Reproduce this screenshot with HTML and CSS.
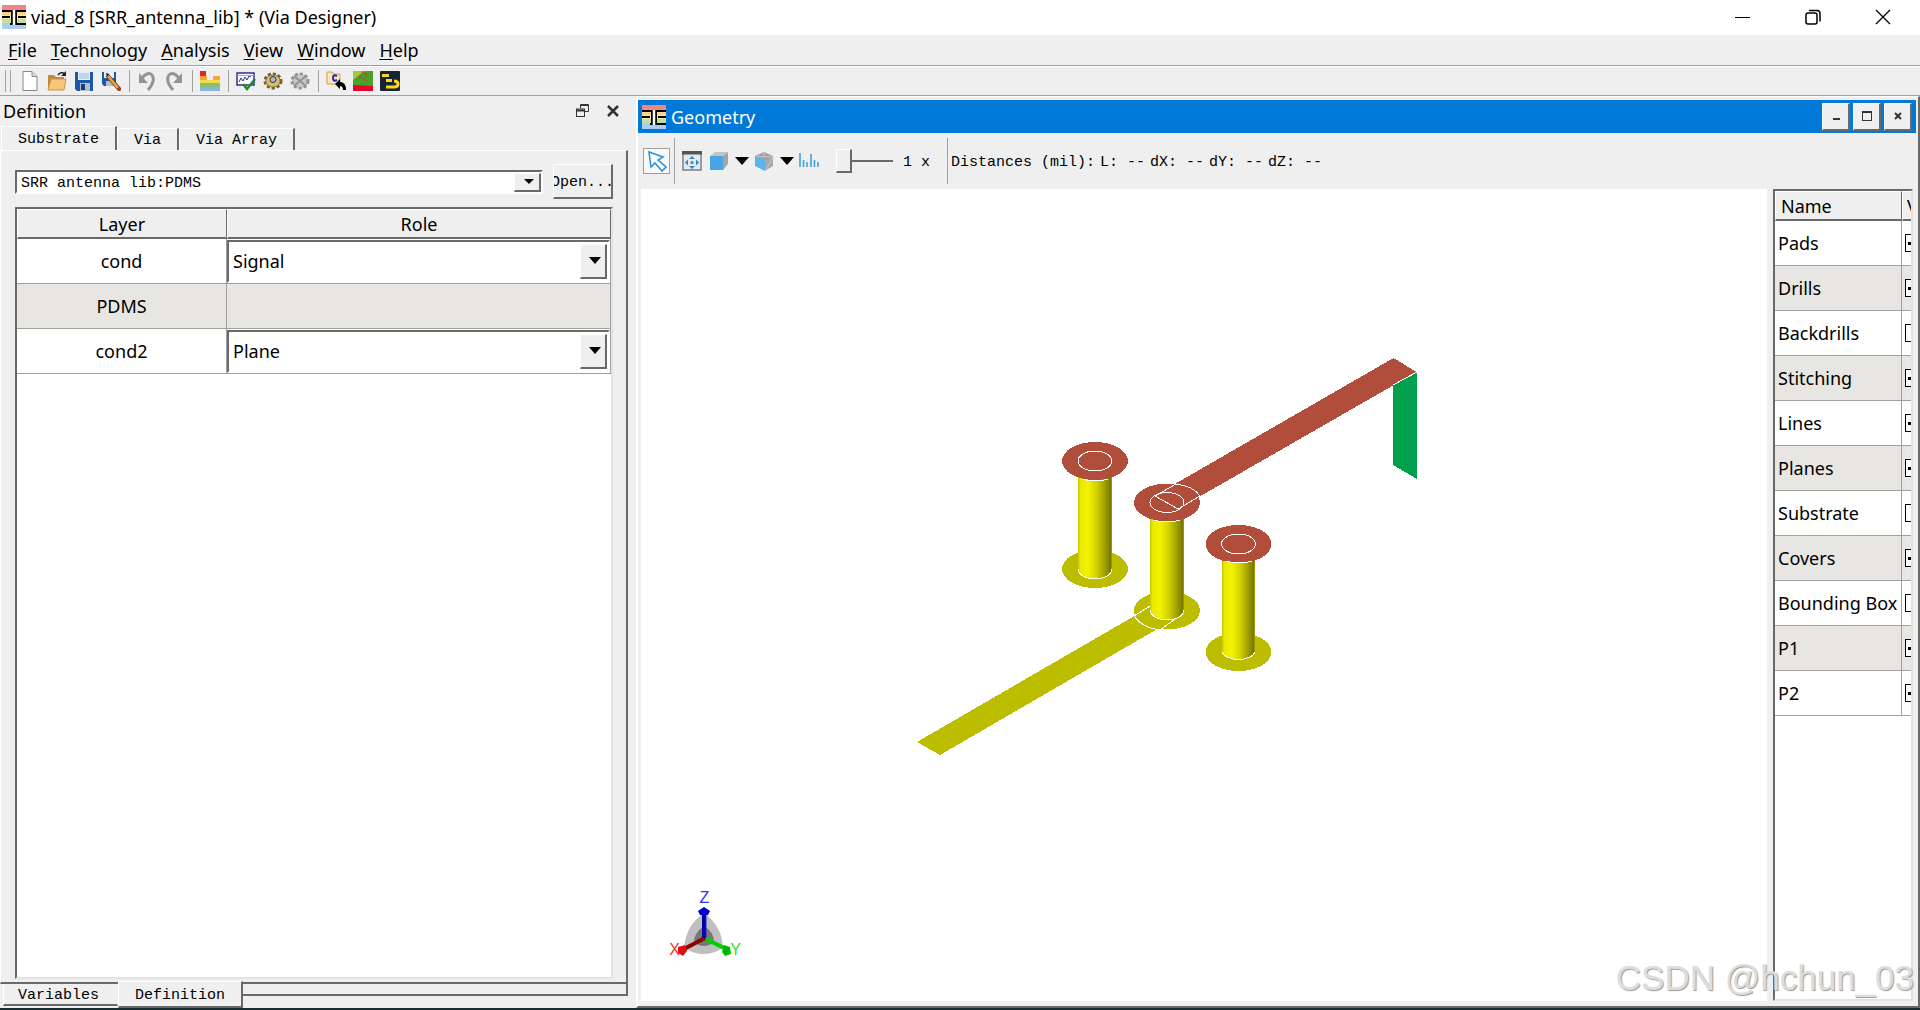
FILE: index.html
```html
<!DOCTYPE html>
<html lang="en">
<head>
<meta charset="utf-8">
<title>viad_8 [SRR_antenna_lib] * (Via Designer)</title>
<link rel="stylesheet" href="styles.css">
</head>
<body>
<svg class="defs" aria-hidden="true">
  <symbol id="logo" viewBox="0 0 24 24">
    <rect width="24" height="7" fill="#ef8683"/><rect y="6" width="24" height="4" fill="#fbd48a"/><rect y="10" width="24" height="4" fill="#f4ee9a"/><rect y="14" width="24" height="5" fill="#bfe0a0"/><rect y="18" width="24" height="6" fill="#a9cdee"/>
    <path d="M0 6h24M0 12h8M16 12h8M8 19h16M10 6v13M14 6v13" stroke="#000" stroke-width="2" fill="none"/><path d="M12 5v15" stroke="#fff" stroke-width="2.500"/>
  </symbol>
  <linearGradient id="barrel"><stop offset="0" stop-color="#c8c800"/><stop offset=".08" stop-color="#eaea00"/><stop offset=".3" stop-color="#f2f200"/><stop offset=".55" stop-color="#d2d200"/><stop offset=".8" stop-color="#9c9c00"/><stop offset=".96" stop-color="#787800"/><stop offset="1" stop-color="#a8a800"/></linearGradient>
</svg>

<header class="titlebar">
  <svg class="app-logo"><use href="#logo"/></svg>
  <h1 class="app-title">viad_8 [SRR_antenna_lib] * (Via Designer)</h1>
  <div class="caption-buttons">
    <button aria-label="Minimize"><svg width="16" height="16" viewBox="0 0 16 16"><path d="M0 8.500h15" stroke="#000"/></svg></button>
    <button aria-label="Restore"><svg width="16" height="16" viewBox="0 0 16 16" fill="none" stroke="#000" stroke-width="1.500"><rect x="1" y="4" width="11" height="11" rx="2"/><path d="M4 1.500h8q3 0 3 3v8"/></svg></button>
    <button aria-label="Close"><svg width="16" height="16" viewBox="0 0 16 16"><path d="M1 1l14 14M15 1L1 15" stroke="#000" stroke-width="1.300"/></svg></button>
  </div>
</header>

<nav class="menubar">
  <button><u>F</u>ile</button><button><u>T</u>echnology</button><button><u>A</u>nalysis</button><button><u>V</u>iew</button><button><u>W</u>indow</button><button><u>H</u>elp</button>
</nav>

<div class="toolbar">
  <span class="grip"></span>
  <button aria-label="New"><svg viewBox="0 0 20 20"><path d="M3 .5h9l5 5v14H3z" fill="#fff" stroke="#888"/><path d="M12 .5v5h5" fill="#ddd" stroke="#888"/></svg></button>
  <button aria-label="Open"><svg viewBox="0 0 20 20"><path d="M1 4h6l2 2h8v12H1z" fill="#c28b3c"/><path d="M4 8h15l-2 11H1z" fill="#f3c77d" stroke="#c99245"/><path d="M11 4q3-4 7-1" fill="none" stroke="#222" stroke-width="1.500"/><path d="M19 0v5h-5z" fill="#222"/></svg></button>
  <button aria-label="Save"><svg viewBox="0 0 20 20"><path d="M1 1h18v19H3l-2-2z" fill="#1d57a8"/><path d="M4 1h12v8H4z" fill="#e8f0f8"/><path d="M5 3h10M5 5h10M5 7h10" stroke="#9ab5d4"/><path d="M6 12h10v8H6z" fill="#b9bdc4"/><path d="M7 13h4v6H7z" fill="#163b78"/></svg></button>
  <button aria-label="Save as"><svg viewBox="0 0 20 20"><path d="M1 1h14v14H3l-2-2z" fill="#1d57a8"/><path d="M3 1h10v6H3z" fill="#e8f0f8"/><path d="M5 10h7v5H5z" fill="#b9bdc4"/><path d="M6 4l13 15" stroke="#704214" stroke-width="4"/><path d="M7 5l10 12" stroke="#f2a64a" stroke-width="2.500"/><path d="M5 2l3 1-2 2z" fill="#111"/><path d="M17 17l2 3" stroke="#b33" stroke-width="3"/></svg></button>
  <span class="rule"></span>
  <button aria-label="Undo"><svg viewBox="0 0 20 20"><path d="M5 7q6-7 10-3q4 6-4 15" fill="none" stroke="#949494" stroke-width="3"/><path d="M2 2v10h9z" fill="#949494"/></svg></button>
  <button aria-label="Redo"><svg viewBox="0 0 20 20"><path d="M15 7Q9 0 5 4q-4 6 4 15" fill="none" stroke="#949494" stroke-width="3"/><path d="M18 2v10H9z" fill="#949494"/></svg></button>
  <span class="rule"></span>
  <button aria-label="Substrate"><svg viewBox="0 0 20 20"><path d="M0 0h6v5H0z" fill="#e2242b"/><path d="M0 5h7v4h6V5h7v5H0z" fill="#f5a83a"/><path d="M0 9h20v3H0z" fill="#f3dc50"/><path d="M0 12h20v4H0z" fill="#8cc070"/><path d="M0 16h20v4H0z" fill="#88b2e2"/></svg></button>
  <span class="rule"></span>
  <button aria-label="Check design"><svg viewBox="0 0 20 20"><rect x="1" y="2" width="17" height="12" fill="#fff" stroke="#332b96" stroke-width="1.500"/><path d="M3 11l2-4 2 3 2-4 2 3 2-4 2 1" stroke="#332b96" fill="none"/><path d="M1 4.500h17" stroke="#a6a4de"/><path d="M7 13l4 5 8-10" fill="none" stroke="#198c2c" stroke-width="2.500"/></svg></button>
  <button aria-label="Simulation settings"><svg viewBox="0 0 20 20"><ellipse cx="10" cy="10" rx="8" ry="7" fill="#dcc684" stroke="#735f2c" stroke-width="3" stroke-dasharray="3 2"/><ellipse cx="10" cy="10" rx="7" ry="6" fill="#d6bd74" stroke="#937c40"/><circle cx="10" cy="8.500" r="3" fill="#a9b9cc" stroke="#333"/></svg></button>
  <button aria-label="Stop simulation"><svg viewBox="0 0 20 20"><ellipse cx="10" cy="10" rx="8" ry="7" fill="#c2c2c2" stroke="#929292" stroke-width="3" stroke-dasharray="3 2"/><circle cx="10" cy="10" r="6" fill="#c8c8c8"/><path d="M4 5l12 10M16 5L4 15" stroke="#929292" stroke-width="2"/></svg></button>
  <span class="rule"></span>
  <button aria-label="Export component"><svg viewBox="0 0 20 20"><path d="M1 1h5l1 2h7v10H1z" fill="#ffe6b0" stroke="#d59a50"/><path d="M11 5q-4-2-4 2t4 2" fill="none" stroke="#1727d2" stroke-width="2"/><path d="M9 13l5-5v3q6 0 6 8h-3q0-4-3-4v3z" fill="#000"/></svg></button>
  <button aria-label="Field viewer"><svg viewBox="0 0 20 20"><path d="M0 0h20v16H0z" fill="#47a32c"/><path d="M0 0h12L0 9z" fill="#9acc38"/><path d="M5 5l10 6M9 1l8 4M10 0L6 8M14 2l-3 8" stroke="#e33220" stroke-dasharray="2 1"/><path d="M0 14l20 1v5H0z" fill="#e3062a"/></svg></button>
  <button aria-label="Layout"><svg viewBox="0 0 20 20"><rect width="20" height="20" rx="1" fill="#172434"/><path d="M2 4.500h7M6 9.500h6M14 10q4 0 4 3t-4 3H6" fill="none" stroke="#ffd51c" stroke-width="3"/></svg></button>
</div>

<main class="workspace">
  <section class="dock">
    <div class="dock-title">
      <h2>Definition</h2>
      <button aria-label="Float"><svg width="14" height="14" viewBox="0 0 14 14" fill="none" stroke="#333"><path d="M4.500 4V.5h8v7H9M4 1.500h9" /><rect x=".5" y="5" width="8" height="7.500"/><path d="M0 6.500h9" stroke-width="2"/></svg></button>
      <button aria-label="Close dock"><svg width="14" height="14" viewBox="0 0 14 14"><path d="M2 2l10 10M12 2L2 12" stroke="#333" stroke-width="2.500"/></svg></button>
    </div>
    <div class="tabs" role="tablist">
      <button class="tab tab-on" role="tab">Substrate</button><button class="tab" role="tab">Via</button><button class="tab" role="tab">Via Array</button>
    </div>
    <div class="panel">
      <div class="substrate-row">
        <span class="combo combo-small"><select aria-label="Substrate"><option>SRR antenna lib:PDMS</option></select></span>
        <button class="open-button"><span>Open...</span></button>
      </div>
      <div class="layer-box">
        <table class="grid-table layers">
          <thead><tr><th class="col-layer">Layer</th><th>Role</th></tr></thead>
          <tbody>
            <tr><td>cond</td><td><span class="combo"><select aria-label="Role of cond"><option>Signal</option><option>Plane</option></select></span></td></tr>
            <tr><td>PDMS</td><td></td></tr>
            <tr><td>cond2</td><td><span class="combo"><select aria-label="Role of cond2"><option>Plane</option><option>Signal</option></select></span></td></tr>
          </tbody>
        </table>
      </div>
    </div>
    <div class="dock-tabs" role="tablist">
      <button class="dock-tab" role="tab">Variables</button><button class="dock-tab dock-tab-on" role="tab">Definition</button><span class="dock-shelf"></span>
    </div>
  </section>

  <section class="subwindow">
    <div class="sub-title">
      <svg class="app-logo"><use href="#logo"/></svg>
      <h2>Geometry</h2>
      <div class="sub-buttons">
        <button aria-label="Minimize view"><svg width="12" height="12" viewBox="0 0 12 12"><path d="M3 9h7" stroke="#333" stroke-width="2"/></svg></button>
        <button aria-label="Maximize view"><svg width="12" height="12" viewBox="0 0 12 12"><rect x="1.500" y="1.500" width="9" height="9" fill="none" stroke="#333"/><path d="M1 2h10" stroke="#333" stroke-width="2"/></svg></button>
        <button aria-label="Close view"><svg width="12" height="12" viewBox="0 0 12 12"><path d="M3 3l6 6M9 3L3 9" stroke="#333" stroke-width="2"/></svg></button>
      </div>
    </div>

    <div class="view-tools">
      <button class="tool pressed" aria-label="Select"><svg width="20" height="22" viewBox="0 0 20 22"><path d="M2 2l2 15 4-4 7 8 4-4-8-7 5-3z" fill="#fff" stroke="#3095d8" stroke-width="1.600"/></svg></button>
      <span class="tall-rule"></span>
      <button class="tool" aria-label="Fit view"><svg width="20" height="20" viewBox="0 0 20 20"><rect x="1" y="1" width="18" height="18" fill="#e6e8ea" stroke="#808080" stroke-width="1.500"/><path d="M0 1.500h20" stroke="#555" stroke-width="4"/><path d="M10 5l3 3H7zM10 18l3-3H7zM3 11.500l3-3v6zM17 11.500l-3-3v6z" fill="#2d8bcb"/><circle cx="10" cy="11.500" r="1.500" fill="#2d8bcb"/></svg></button>
      <button class="tool" aria-label="Projection"><svg width="20" height="20" viewBox="0 0 20 20"><path d="M1 5l5-4h13l-5 4z" fill="#c4c4c4"/><path d="M14 5l5-4v12l-5 6z" fill="#a4a4a4"/><path d="M1 5h13v14H1z" fill="#47a6e3"/></svg></button>
      <span class="drop"></span>
      <button class="tool" aria-label="Orientation"><svg width="20" height="20" viewBox="0 0 20 20"><path d="M10 1l9 4-8 5L1 5z" fill="#a0a0a0"/><path d="M10 1v5M1 5l9 1 9-1" stroke="#c8c8c8" fill="none"/><path d="M11 9l8-4v10l-8 5z" fill="#a8a8a8"/><path d="M11 20l8-14" stroke="#c8c8c8"/><path d="M1 5l10 4v11L1 15z" fill="#5cb4ea"/></svg></button>
      <span class="drop"></span>
      <button class="tool" aria-label="Ruler"><svg width="20" height="18" viewBox="0 0 20 18"><path d="M1 1v14M4.500 8v7M8 10v5M12 2v13M15.500 8v7M19 10v5" stroke="#3a9cdc" stroke-width="1.500"/></svg></button>
      <input class="zoom" type="range" min="1" max="10" value="1" aria-label="Scale">
      <output class="zoom-value">1 x</output>
      <span class="tall-rule"></span>
      <div class="distances"><span>Distances (mil):</span><span>L: --</span><span>dX: --</span><span>dY: --</span><span>dZ: --</span></div>
    </div>

    <div class="view-area">
      <svg class="canvas" viewBox="641 189 1126 812" role="img" aria-label="Via geometry">
        <g shape-rendering="crispEdges">
          <g fill="#bdbd00"><ellipse cx="1095" cy="569" rx="33" ry="19"/><ellipse cx="1167" cy="610.500" rx="33" ry="19"/><ellipse cx="1238.500" cy="652" rx="33" ry="19"/><path d="M917 742l23 13 238-138-23-13z"/></g>
          <path d="M1150 606l-16 10q8 12 26 14l18-13" fill="none" stroke="#fff"/>
          <g fill="url(#barrel)" stroke="none"><path d="M1078 470v99a17 10 0 0 0 34 0v-99z"/><path d="M1150 512v98a17 10 0 0 0 34 0v-98z"/><path d="M1222 554v98a17 10 0 0 0 33 0v-98z"/></g>
          <path d="M1078 569a17 10 0 0 0 34 0M1150 610a17 10 0 0 0 34 0M1222 652a17 10 0 0 0 33 0" fill="none" stroke="#fff"/>
          <path d="M1393 385l24-13v107l-24-14z" fill="#00a04c"/>
          <g fill="#b04e3b"><ellipse cx="1095" cy="461" rx="33" ry="19"/><ellipse cx="1167" cy="502.500" rx="33" ry="19"/><ellipse cx="1238.500" cy="544" rx="33" ry="19"/><path d="M1393.500 358l23 14-238.500 137-24-13z"/></g>
          <g fill="none" stroke="#fff"><ellipse cx="1095" cy="461" rx="17" ry="10"/><ellipse cx="1167" cy="502.500" rx="17" ry="10"/><ellipse cx="1238.500" cy="544" rx="17" ry="10"/><path d="M1176 484l-21 12 23 13 22-13a33 19 0 0 0-24-12M1393 385l24-13M1082 479q13 4 26 0M1154 520q13 4 26 0M1226 561q13 4 26 0"/></g>
        </g>
        <g>
          <path d="M704 913q-18 12-20 35 20 12 39 0-1-22-19-35z" fill="#bfbfbf"/><path d="M704 926q-10 7-10 16 10 8 20 0 0-10-10-16z" fill="#777"/>
          <path d="M704 938l22 11" stroke="#00d000" stroke-width="4"/><path d="M705 938l-21 11" stroke="#900000" stroke-width="4"/><path d="M704 938v-28" stroke="#0000a8" stroke-width="4"/><path d="M706 938v-28" stroke="#2222d8"/>
          <path d="M704 907l6 4-2 4h-8l-2-4z" fill="#0000c8"/><path d="M678 947l7-2 2 6-4 5-5-3z" fill="#e01010"/><path d="M730 947l-6-2-2 7 3 4 6-2z" fill="#00b800"/>
          <text class="axis" x="704.500" y="903" fill="#3030ff">Z</text><text class="axis" x="674.500" y="955" fill="#ff3030">X</text><text class="axis" x="735.500" y="955" fill="#30e030">Y</text>
        </g>
      </svg>
      <div class="visibility">
        <table class="grid-table items">
          <thead><tr><th class="col-name">Name</th><th>Visible</th></tr></thead>
          <tbody>
            <tr><td><label for="v1">Pads</label></td><td><input id="v1" type="checkbox" checked></td></tr>
            <tr><td><label for="v2">Drills</label></td><td><input id="v2" type="checkbox" checked></td></tr>
            <tr><td><label for="v3">Backdrills</label></td><td><input id="v3" type="checkbox"></td></tr>
            <tr><td><label for="v4">Stitching</label></td><td><input id="v4" type="checkbox" checked></td></tr>
            <tr><td><label for="v5">Lines</label></td><td><input id="v5" type="checkbox" checked></td></tr>
            <tr><td><label for="v6">Planes</label></td><td><input id="v6" type="checkbox" checked></td></tr>
            <tr><td><label for="v7">Substrate</label></td><td><input id="v7" type="checkbox"></td></tr>
            <tr><td><label for="v8">Covers</label></td><td><input id="v8" type="checkbox" checked></td></tr>
            <tr><td><label for="v9">Bounding Box</label></td><td><input id="v9" type="checkbox"></td></tr>
            <tr><td><label for="v10">P1</label></td><td><input id="v10" type="checkbox" checked></td></tr>
            <tr><td><label for="v11">P2</label></td><td><input id="v11" type="checkbox" checked></td></tr>
          </tbody>
        </table>
      </div>
    </div>
  </section>
</main>
<div class="watermark">CSDN @hchun_03</div>
</body>
</html>
```
FILE: styles.css
```css
* { box-sizing: border-box; }

:root {
  --face: #efefef;
  --stripe: #e7e6e2;
  --line: #a0a0a0;
  --shade: #696969;
  --ui: "Noto Sans", "Open Sans", sans-serif;
  --mono: "Liberation Mono", monospace;
}

body {
  margin: 0;
  height: 100vh;
  display: flex;
  flex-direction: column;
  background: var(--face);
  color: #000;
  font: 18px/24px var(--ui);
  border-bottom: 2px solid #1c2b30;
  overflow: hidden;
}

.defs { position: absolute; width: 0; height: 0; }

button {
  padding: 0;
  border: 0;
  background: none;
  color: inherit;
  font: inherit;
}

h1, h2 { margin: 0; font-size: 18px; font-weight: 400; }
svg { display: block; }

/* Title bar */
.titlebar { flex: none; display: flex; align-items: center; height: 35px; padding: 0 2px 2px; background: #fff; }
.app-logo { width: 24px; height: 24px; }
.app-title { margin-left: 5px; }
.caption-buttons { display: flex; margin-left: auto; }
.caption-buttons button { display: flex; justify-content: center; align-items: center; width: 70px; height: 33px; }

/* Menu and main toolbar */
.menubar { flex: none; display: flex; gap: 14px; height: 31px; padding-left: 8px; border-bottom: 1px solid var(--line); }
.menubar u { text-underline-offset: 2px; text-decoration-thickness: 1px; }
.toolbar { flex: none; display: flex; align-items: center; gap: 7px; height: 30px; padding-left: 5px; border-top: 1px solid #fff; border-bottom: 1px solid var(--line); }
.toolbar button, .toolbar svg { width: 20px; height: 20px; }
.grip { width: 6px; height: 22px; margin-right: 2px; border: solid var(--line); border-width: 0 1px; }
.rule { width: 1px; height: 22px; margin-left: 1px; background: var(--line); }

/* Workspace */
.workspace { flex: 1; display: flex; min-height: 0; }
.dock { flex: 0 0 628px; display: flex; flex-direction: column; }
.dock-title { display: flex; align-items: center; gap: 16px; height: 30px; padding: 0 8px 0 3px; }
.dock-title h2 { flex: 1; }
.tabs { display: flex; align-items: flex-end; height: 24px; padding-left: 1px; font: 15px/20px var(--mono); }
.tab { height: 22px; padding: 2px 16px 0; border: solid; border-width: 1px 2px 0 1px; border-color: #fff var(--shade) #fff #fff; }
.tab-on { height: 24px; }
.panel {
  flex: 1;
  display: flex;
  flex-direction: column;
  gap: 8px;
  min-height: 0;
  padding: 13px 13px 3px 14px;
  border: solid;
  border-width: 1px 2px 2px 1px;
  border-color: #fff var(--shade) var(--shade) #fff;
}
.substrate-row { display: flex; align-items: center; gap: 10px; height: 35px; }

.combo { position: relative; display: block; height: 43px; border: 2px solid var(--shade); border-right-color: #fff; border-bottom-color: #fff; background: #fff; }
.combo select { display: block; width: 100%; height: 100%; padding: 0 4px; border: 0; background: none; color: inherit; font: inherit; appearance: none; outline: 0; }
.combo::before { content: ""; position: absolute; top: 2px; right: 1px; bottom: 2px; width: 24px; border: solid; border-width: 1px 2px 2px 1px; border-color: #fff var(--shade) var(--shade) #fff; background: var(--face); pointer-events: none; }
.combo::after { content: ""; position: absolute; right: 7px; top: 50%; margin-top: -4px; border: solid transparent; border-width: 7px 6px 0; border-top-color: #000; pointer-events: none; }
.combo-small { flex: 1; height: 24px; font: 15px/20px var(--mono); }
.combo-small select { padding-top: 2px; }
.combo-small::before { top: 1px; right: 0; bottom: 0; }
.combo-small::after { border-width: 5px 5px 0; right: 7px; margin-top: -3px; }
.open-button { display: flex; justify-content: center; width: 60px; height: 35px; padding-top: 8px; border: solid; border-width: 1px 2px 2px 1px; border-color: #fff var(--shade) var(--shade) #fff; overflow: hidden; font: 15px/20px var(--mono); }

.layer-box { flex: 1; min-height: 0; border: 2px solid var(--shade); border-right-color: #e3e3e3; border-bottom-color: #e3e3e3; background: #fff; }
.grid-table { border-collapse: separate; border-spacing: 0; table-layout: fixed; width: 100%; }
.grid-table th { height: 30px; padding: 0; border: solid; border-width: 1px 1px 2px; border-color: #fff var(--shade) var(--shade) #fff; background: var(--face); font-weight: 400; }
.grid-table td { height: 45px; padding: 0; border: solid var(--line); border-width: 0 1px 1px 0; }
.grid-table tbody tr:nth-child(even) { background: var(--stripe); }
.layers td:first-child { text-align: center; }
.col-layer { width: 210px; }

.dock-tabs { display: flex; align-items: flex-start; height: 24px; padding-left: 3px; font: 15px/20px var(--mono); }
.dock-tab { height: 22px; padding: 2px 18px 0 14px; border: solid; border-width: 0 1px 2px 1px; border-color: #fff var(--face) var(--shade) #fff; }
.dock-tab-on { position: relative; height: 27px; margin-top: -3px; padding: 4px 16px 0; border-width: 1px 2px 2px 1px; border-right-color: var(--shade); background: var(--face); }
.dock-shelf { flex: 1; height: 12px; border: solid var(--shade); border-width: 0 2px 2px 0; }

/* Geometry window */
.subwindow { flex: 1; display: flex; flex-direction: column; min-width: 0; margin-left: 8px; padding: 3px 2px 0 0; border: 2px solid #fff; border-right-color: var(--shade); border-bottom-color: var(--shade); border-top: 1px solid #fff; }
.sub-title { flex: none; display: flex; align-items: center; gap: 5px; height: 33px; padding: 0 4px; background: #0078d7; color: #fff; }
.sub-buttons { display: flex; gap: 3px; margin-left: auto; }
.sub-buttons button { display: flex; justify-content: center; align-items: center; width: 28px; height: 28px; border: solid; border-width: 1px 2px 2px 1px; border-color: #fff var(--shade) var(--shade) #fff; background: var(--face); }

.view-tools { flex: none; display: flex; align-items: center; height: 56px; padding-left: 5px; font: 15px/20px var(--mono); }
.tool { display: flex; justify-content: center; align-items: center; width: 20px; height: 24px; margin-right: 7px; }
.pressed { width: 27px; height: 26px; margin-right: 4px; border: 1px solid var(--line); background: #f8f8f8; }
.tall-rule { width: 1px; height: 46px; margin-right: 7px; background: var(--line); }
.distances { display: flex; gap: 5px; padding-top: 4px; }
.zoom-value + .tall-rule { margin-right: 3px; }
.drop { margin: 0 5px 0 -1px; border: solid transparent; border-width: 8px 7px 0; border-top-color: #000; }
.zoom { width: 57px; height: 24px; margin: 0 10px; appearance: none; background: none; }
.zoom::-webkit-slider-runnable-track { height: 24px; background: linear-gradient(var(--shade), var(--shade)) 0 11px / 100% 2px no-repeat; }
.zoom::-webkit-slider-thumb { appearance: none; width: 16px; height: 24px; border: solid; border-width: 1px 2px 2px 1px; border-color: #fff var(--shade) var(--shade) #fff; background: var(--face); }
.zoom-value { margin-right: 17px; padding-top: 4px; }

.view-area { flex: 1; display: flex; min-height: 0; padding: 0 3px 5px; }
.canvas { flex: 1; min-width: 0; height: 100%; background: #fff; }
.axis { font: 16px "Liberation Sans", sans-serif; text-anchor: middle; }
.visibility { flex: none; width: 140px; margin-left: 6px; border: 2px solid var(--shade); border-right-color: #e3e3e3; border-bottom-color: #e3e3e3; background: #fff; overflow: hidden; }
.items { width: 190px; }
.items th { padding-left: 5px; text-align: left; }
.items th + th { padding-left: 4px; }
.items td { padding-left: 3px; }
.col-name { width: 127px; }
.items input { display: grid; place-items: center; width: 18px; height: 18px; margin: 0; border: 1px solid #000; background: #fff; appearance: none; }
.items input:checked::before { content: ""; width: 12px; height: 3px; background: #000; }

.watermark { position: absolute; right: 6px; bottom: 12px; color: #ddd; font: 35px/40px "Liberation Sans", sans-serif; text-shadow: 1px 1px 1px #999; pointer-events: none; }
```
